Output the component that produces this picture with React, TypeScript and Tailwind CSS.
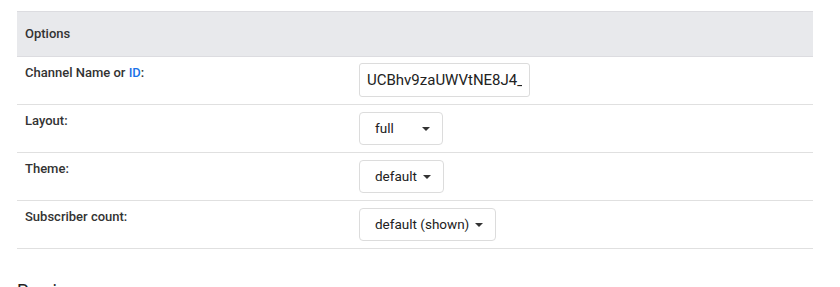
import React from 'react'

const font = { fontFamily: 'Roboto, "Noto Sans", Arial, sans-serif' }

type SelectProps = { value: string }

const Select: React.FC<SelectProps> = ({ value }) => (
  <div className="flex h-[33px] min-w-[84px] items-center justify-between gap-[6px] rounded-[4px] border border-[#dcdcdc] bg-white pl-[15px] pr-[12px] text-[13.5px] text-[#212121]">
    <span>{value}</span>
    <span className="h-0 w-0 border-x-[4px] border-t-[4px] border-x-transparent border-t-[#333]" />
  </div>
)

type RowProps = { label: React.ReactNode; children: React.ReactNode; controlPad?: string }

const Row: React.FC<RowProps> = ({ label, children, controlPad = 'pt-[7px]' }) => (
  <div className="flex h-[48px] border-b border-[#e0e0e0]">
    <div className="w-[334px] pl-[8px] pt-[7px] text-[13px] leading-[17px] font-medium text-[#333]">{label}</div>
    <div className={`pl-[8px] ${controlPad}`}>{children}</div>
  </div>
)

export default function App() {
  return (
    <div className="min-h-[287px] bg-white pt-[11px] pl-[17px]" style={font}>
      <div className="w-[796px]">
        <div className="flex h-[46px] items-center border-y border-[#dcdce0] bg-[#e8e9ec] pl-[8px] text-[13px] font-medium text-[#333]">
          Options
        </div>
        <Row
          controlPad="pt-[6px]"
          label={
            <>
              Channel Name or <span className="text-[#1a73e8]">ID</span>:
            </>
          }
        >
          <input
            readOnly
            value="UCBhv9zaUWVtNE8J4_"
            className="h-[34px] w-[171px] rounded-[3px] border border-[#dcdcdc] px-[7px] text-[15px] text-[#222] outline-none"
            style={font}
          />
        </Row>
        <Row label="Layout:">
          <Select value="full" />
        </Row>
        <Row label="Theme:">
          <Select value="default" />
        </Row>
        <Row label="Subscriber count:">
          <Select value="default (shown)" />
        </Row>
        <h2 className="mt-[30px] text-[18px] leading-[24px] text-[#222]">Preview</h2>
      </div>
    </div>
  )
}
